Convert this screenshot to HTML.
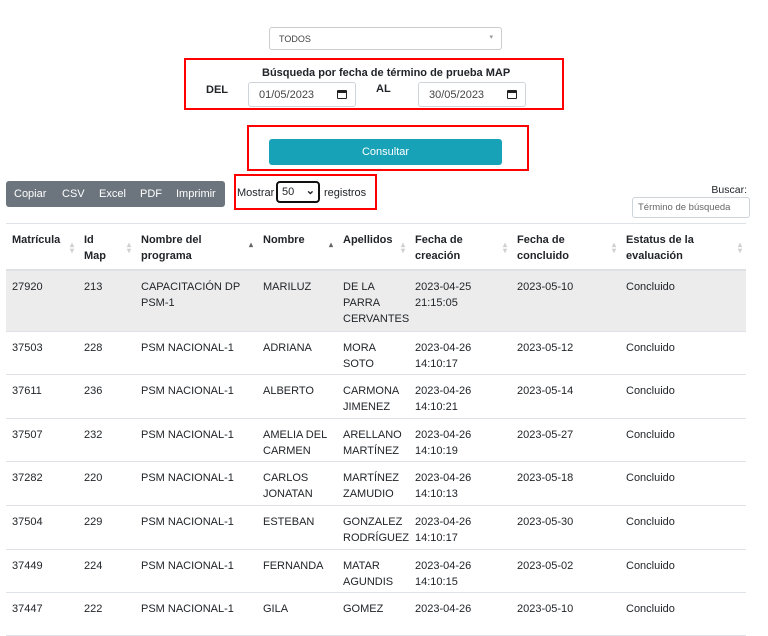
<!DOCTYPE html>
<html><head><meta charset="utf-8"><style>
*{box-sizing:border-box;margin:0;padding:0}
body{width:768px;height:615px;overflow:hidden;background:#fff;font-family:"Liberation Sans",sans-serif;color:#212529;font-size:11px;position:relative}
.abs{position:absolute}
.red{position:absolute;border:2px solid #f00}
.inp{position:absolute;border:1px solid #ced4da;border-radius:3px;background:#fff}
table{position:absolute;left:6px;top:223px;width:740px;border-collapse:collapse;table-layout:fixed}
td,th{text-align:left;vertical-align:top;padding:8px 6px 0 6px;line-height:16px;font-size:11px}
th{font-weight:bold;height:46px;border-top:1px solid #dee2e6;border-bottom:2px solid #dee2e6;position:relative;padding-top:8px}
td{border-bottom:1px solid #dee2e6}
tr.g td{background:#ececec}
.s{position:absolute;right:4px;top:18px;color:#d0d0d0;font-size:8px;line-height:6px}
.cal{position:absolute;right:8px;top:7px;width:10px;height:9px;border:1.5px solid #222;border-top-width:3px;border-radius:1px}
</style></head><body>
<div class="inp" style="left:269px;top:27px;width:233px;height:23px;border-color:#ccc"><span class="abs" style="left:9px;top:6px;font-size:9px;color:#444">TODOS</span><span class="abs" style="right:8px;top:5px;font-size:7px;color:#999">▾</span></div>
<div class="red" style="left:184px;top:58px;width:380px;height:52px"></div>
<div class="abs" style="left:262px;top:67px;font-weight:bold;font-size:11px">Búsqueda por fecha de término de prueba MAP</div>
<div class="abs" style="left:206px;top:84px;font-weight:bold;font-size:11px">DEL</div>
<div class="abs" style="left:376px;top:83px;font-weight:bold;font-size:11px">AL</div>
<div class="inp" style="left:248px;top:82px;width:108px;height:25px"><span class="abs" style="left:10px;top:6px;color:#444">01/05/2023</span><span class="cal"></span></div>
<div class="inp" style="left:418px;top:82px;width:108px;height:25px"><span class="abs" style="left:10px;top:6px;color:#444">30/05/2023</span><span class="cal"></span></div>
<div class="red" style="left:247px;top:125px;width:282px;height:46px"></div>
<div class="abs" style="left:269px;top:139px;width:233px;height:26px;background:#17a2b8;border-radius:3px;color:#fff;text-align:center;line-height:26px;font-size:11px">Consultar</div>
<div class="abs" style="left:6px;top:181px;width:219px;height:26px;background:#6c757d;border-radius:3px;color:#fff;font-size:11px;line-height:26px">
<span class="abs" style="left:8px">Copiar</span><span class="abs" style="left:56px">CSV</span><span class="abs" style="left:93px">Excel</span><span class="abs" style="left:134px">PDF</span><span class="abs" style="left:170px">Imprimir</span></div>
<div class="red" style="left:234px;top:174px;width:143px;height:36px"></div>
<div class="abs" style="left:237px;top:187px">Mostrar</div>
<div class="abs" style="left:276px;top:181px;width:44px;height:22px;border:2px solid #111;border-radius:4px"><span class="abs" style="left:4px;top:3px">50</span><span class="abs" style="right:3px;top:1px;font-size:11px;font-weight:bold">⌄</span></div>
<div class="abs" style="left:324px;top:187px">registros</div>
<div class="abs" style="right:21px;top:184px;font-size:10.5px">Buscar:</div>
<div class="inp" style="left:632px;top:197px;width:118px;height:21px"><span class="abs" style="left:5px;top:4px;font-size:9.5px;color:#666">Término de búsqueda</span></div>
<table>
<colgroup><col style="width:72px"><col style="width:57px"><col style="width:122px"><col style="width:80px"><col style="width:72px"><col style="width:102px"><col style="width:109px"><col style="width:126px"></colgroup>
<tr><th>Matrícula<span class="s">▴<br>▾</span></th><th>Id<br>Map<span class="s">▴<br>▾</span></th><th>Nombre del<br>programa<span class="s" style="color:#666">▴</span></th><th>Nombre<span class="s" style="color:#666">▴</span></th><th>Apellidos<span class="s">▴<br>▾</span></th><th>Fecha de<br>creación<span class="s">▴<br>▾</span></th><th>Fecha de<br>concluido<span class="s">▴<br>▾</span></th><th>Estatus de la<br>evaluación<span class="s">▴<br>▾</span></th></tr>
<tr class="g" style="height:62px"><td>27920</td><td>213</td><td>CAPACITACIÓN DP PSM-1</td><td>MARILUZ</td><td>DE LA PARRA CERVANTES</td><td>2023-04-25 21:15:05</td><td>2023-05-10</td><td>Concluido</td></tr>
<tr style="height:43px"><td>37503</td><td>228</td><td>PSM NACIONAL-1</td><td>ADRIANA</td><td>MORA SOTO</td><td>2023-04-26 14:10:17</td><td>2023-05-12</td><td>Concluido</td></tr>
<tr style="height:44px"><td>37611</td><td>236</td><td>PSM NACIONAL-1</td><td>ALBERTO</td><td>CARMONA JIMENEZ</td><td>2023-04-26 14:10:21</td><td>2023-05-14</td><td>Concluido</td></tr>
<tr style="height:43px"><td>37507</td><td>232</td><td>PSM NACIONAL-1</td><td>AMELIA DEL CARMEN</td><td>ARELLANO MARTÍNEZ</td><td>2023-04-26 14:10:19</td><td>2023-05-27</td><td>Concluido</td></tr>
<tr style="height:44px"><td>37282</td><td>220</td><td>PSM NACIONAL-1</td><td>CARLOS JONATAN</td><td>MARTÍNEZ ZAMUDIO</td><td>2023-04-26 14:10:13</td><td>2023-05-18</td><td>Concluido</td></tr>
<tr style="height:44px"><td>37504</td><td>229</td><td>PSM NACIONAL-1</td><td>ESTEBAN</td><td>GONZALEZ RODRÍGUEZ</td><td>2023-04-26 14:10:17</td><td>2023-05-30</td><td>Concluido</td></tr>
<tr style="height:43px"><td>37449</td><td>224</td><td>PSM NACIONAL-1</td><td>FERNANDA</td><td>MATAR AGUNDIS</td><td>2023-04-26 14:10:15</td><td>2023-05-02</td><td>Concluido</td></tr>
<tr style="height:43px"><td>37447</td><td>222</td><td>PSM NACIONAL-1</td><td>GILA</td><td>GOMEZ</td><td>2023-04-26</td><td>2023-05-10</td><td>Concluido</td></tr>
</table>
</body></html>
